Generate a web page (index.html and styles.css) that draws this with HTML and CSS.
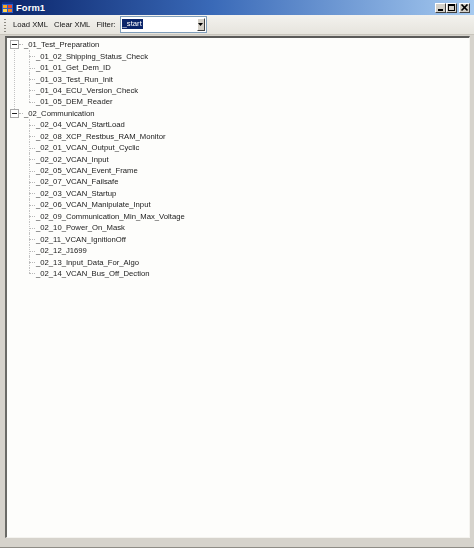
FILE: index.html
```html
<!DOCTYPE html>
<html>
<head>
<meta charset="utf-8">
<title>Form1</title>
<link rel="stylesheet" href="styles.css">
</head>
<body>
<div class="window">
  <div class="titlebar">
    <svg class="app-icon" width="11" height="11" viewBox="0 0 11 11">
      <rect x="0" y="0" width="11" height="11" fill="#2a5cc8"/>
      <rect x="1" y="3" width="4" height="3" fill="#f6a623"/>
      <rect x="6" y="3" width="4" height="3" fill="#e84a2a"/>
      <rect x="1" y="7" width="4" height="3" fill="#ffd54a"/>
      <rect x="6" y="7" width="4" height="3" fill="#f07d22"/>
      <rect x="0" y="0" width="11" height="2" fill="#0b2f8a"/>
    </svg>
    <span class="title">Form1</span>
    <div class="caption-buttons">
      <span class="cbtn"><svg width="9" height="8" viewBox="0 0 9 8"><rect x="2" y="5" width="5" height="2" fill="#000"/></svg></span>
      <span class="cbtn"><svg width="9" height="8" viewBox="0 0 9 8"><rect x="1.5" y="0.5" width="6" height="6" fill="none" stroke="#000"/><rect x="1" y="0" width="7" height="2" fill="#000"/></svg></span>
      <span class="cbtn close"><svg width="9" height="8" viewBox="0 0 9 8"><path d="M1.5 0.5 L7.5 6.5 M7.5 0.5 L1.5 6.5" stroke="#000" stroke-width="1.6"/></svg></span>
    </div>
  </div>
  <div class="toolbar">
    <span class="grip"></span>
    <span class="tb-item">Load XML</span>
    <span class="tb-item">Clear XML</span>
    <span class="tb-label">Filter:</span>
    <div class="combo">
      <span class="combo-text"><span class="sel">_start</span></span>
      <span class="combo-btn"><svg width="5" height="3" viewBox="0 0 5 3"><path d="M0 0 H5 L2.5 3 Z" fill="#000"/></svg></span>
    </div>
  </div>
  <div class="tree">
    <ul class="roots">
      <li class="root">
        <div class="row root-row"><span class="box"><span class="minus"></span></span><span class="hconn"></span><span class="label">_01_Test_Preparation</span></div>
        <ul class="children">
          <li><div class="row child-row"><span class="label">_01_02_Shipping_Status_Check</span></div></li>
          <li><div class="row child-row"><span class="label">_01_01_Get_Dem_ID</span></div></li>
          <li><div class="row child-row"><span class="label">_01_03_Test_Run_Init</span></div></li>
          <li><div class="row child-row"><span class="label">_01_04_ECU_Version_Check</span></div></li>
          <li><div class="row child-row"><span class="label">_01_05_DEM_Reader</span></div></li>
        </ul>
      </li>
      <li class="root">
        <div class="row root-row"><span class="box"><span class="minus"></span></span><span class="hconn"></span><span class="label">_02_Communication</span></div>
        <ul class="children">
          <li><div class="row child-row"><span class="label">_02_04_VCAN_StartLoad</span></div></li>
          <li><div class="row child-row"><span class="label">_02_08_XCP_Restbus_RAM_Monitor</span></div></li>
          <li><div class="row child-row"><span class="label">_02_01_VCAN_Output_Cyclic</span></div></li>
          <li><div class="row child-row"><span class="label">_02_02_VCAN_Input</span></div></li>
          <li><div class="row child-row"><span class="label">_02_05_VCAN_Event_Frame</span></div></li>
          <li><div class="row child-row"><span class="label">_02_07_VCAN_Failsafe</span></div></li>
          <li><div class="row child-row"><span class="label">_02_03_VCAN_Startup</span></div></li>
          <li><div class="row child-row"><span class="label">_02_06_VCAN_Manipulate_Input</span></div></li>
          <li><div class="row child-row"><span class="label">_02_09_Communication_Min_Max_Voltage</span></div></li>
          <li><div class="row child-row"><span class="label">_02_10_Power_On_Mask</span></div></li>
          <li><div class="row child-row"><span class="label">_02_11_VCAN_IgnitionOff</span></div></li>
          <li><div class="row child-row"><span class="label">_02_12_J1699</span></div></li>
          <li><div class="row child-row"><span class="label">_02_13_Input_Data_For_Algo</span></div></li>
          <li><div class="row child-row"><span class="label">_02_14_VCAN_Bus_Off_Dection</span></div></li>
        </ul>
      </li>
    </ul>
  </div>
</div>
</body>
</html>
```

FILE: styles.css
```css
html, body {
  margin: 0;
  padding: 0;
  background: #d4d0c8;
}
.window {
  width: 474px;
  height: 548px;
  box-sizing: border-box;
  background: #d6d3cc;
  display: flex;
  flex-direction: column;
  font-family: "Liberation Sans", Arial, sans-serif;
  border-bottom: 1px solid #8e8c86;
  overflow: hidden;
  -webkit-font-smoothing: antialiased;
}
.titlebar {
  height: 15px;
  flex: none;
  display: flex;
  align-items: center;
  background: linear-gradient(to right, #0a246a 0%, #3a6ab8 45%, #a6caf0 100%);
  padding: 0 4px 0 2px;
}
.app-icon {
  flex: none;
  margin-right: 3px;
}
.title {
  color: #fff;
  font-weight: bold;
  font-size: 9.4px;
  letter-spacing: 0.1px;
}
.caption-buttons {
  margin-left: auto;
  display: flex;
  align-items: center;
}
.cbtn {
  width: 11px;
  height: 10px;
  box-sizing: border-box;
  background: #d4d0c8;
  border: 1px solid;
  border-color: #fff #404040 #404040 #fff;
  display: flex;
  align-items: center;
  justify-content: center;
}
.cbtn svg { display: block; }
.cbtn.close {
  margin-left: 2px;
}
.toolbar {
  height: 20px;
  flex: none;
  display: flex;
  align-items: center;
  background: linear-gradient(to bottom, #f3f2ee 0%, #e6e4dd 100%);
  font-size: 7.7px;
  color: #111;
  border-bottom: 1px solid #c8c5bc;
  box-sizing: border-box;
  will-change: transform;
}
.grip {
  width: 2px;
  height: 14px;
  margin: 0 7px 0 4px;
  background-image: radial-gradient(circle, #8d8a82 0.8px, transparent 1px);
  background-size: 2px 3px;
}
.tb-item {
  margin-right: 6px;
}
.tb-label {
  margin-right: 4px;
}
.combo {
  width: 87px;
  height: 17px;
  margin-bottom: 1px;
  box-sizing: border-box;
  border: 1px solid #7f9db9;
  background: #fff;
  display: flex;
  align-items: stretch;
}
.combo-text {
  flex: 1;
  display: flex;
  align-items: center;
  padding-left: 1px;
}
.sel {
  background: #0a246a;
  color: #fff;
  padding: 0 1px;
  line-height: 10px;
  font-size: 7.7px;
}
.combo-btn {
  width: 8px;
  margin: 1px;
  background: #d4d0c8;
  border: 1px solid;
  border-color: #fff #404040 #404040 #fff;
  box-sizing: border-box;
  display: flex;
  align-items: center;
  justify-content: center;
}
.combo-btn svg { display: block; }
.tree {
  flex: none;
  height: 502px;
  margin: 1px 4px 0 5px;
  box-sizing: border-box;
  background: #fdfdfb;
  border-style: solid;
  border-width: 2px 1px 1px 2px;
  border-color: #5a5a58 #f4f3ef #f4f3ef #6a6a66;
  padding-top: 1px;
  font-size: 7.7px;
  color: #1a1a1a;
}
.roots {
  will-change: transform;
}
ul {
  list-style: none;
  margin: 0;
  padding: 0;
}
li {
  position: relative;
}
.row {
  height: 11.45px;
  display: flex;
  align-items: center;
  white-space: nowrap;
  position: relative;
}
.root-row {
  padding-left: 3px;
}
.box {
  position: relative;
  z-index: 2;
  width: 9px;
  height: 9px;
  box-sizing: border-box;
  border: 1px solid #a8a8a8;
  background: #fff;
  flex: none;
}
.minus {
  position: absolute;
  left: 1px;
  top: 3px;
  width: 5px;
  height: 1px;
  background: #222;
}
.hconn {
  width: 4px;
  margin-right: 1px;
  border-top: 1px dotted #b8b8b8;
}
.roots > li:not(:last-child)::before {
  content: "";
  position: absolute;
  left: 7px;
  top: 5.7px;
  bottom: -5.7px;
  border-left: 1px dotted #c4c4c4;
}
.child-row {
  padding-left: 29px;
}
.child-row::before {
  content: "";
  position: absolute;
  left: 22px;
  top: 50%;
  width: 6px;
  border-top: 1px dotted #b8b8b8;
}
.children > li::after {
  content: "";
  position: absolute;
  left: 22px;
  top: 0;
  height: 100%;
  border-left: 1px dotted #c4c4c4;
}
.children > li:last-child::after {
  height: 50%;
}
.label {
  line-height: 11px;
}
```
